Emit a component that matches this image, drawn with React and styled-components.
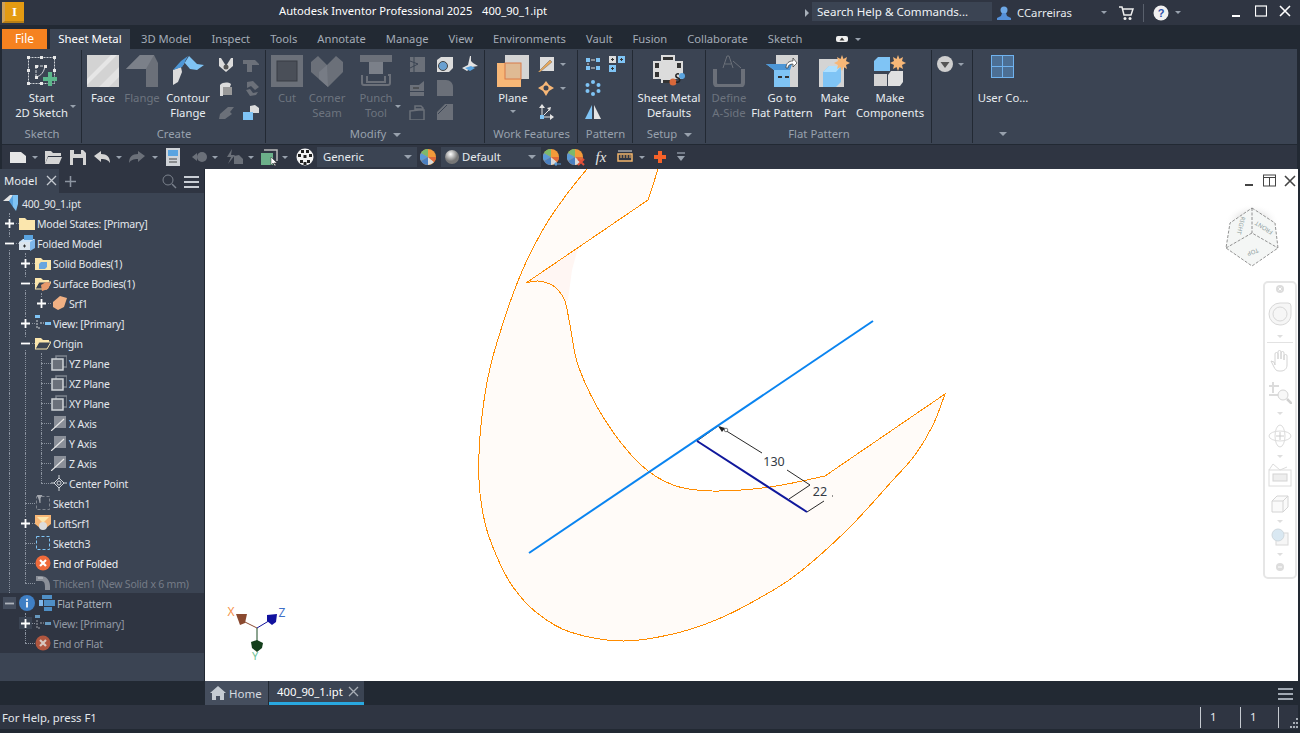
import React from 'react';
import styled, { createGlobalStyle } from 'styled-components';

const Global = createGlobalStyle`
  html, body { margin: 0; padding: 0; height: 100%; overflow: hidden; background: #222933; }
  #root { height: 100%; }
  * { box-sizing: border-box; }
`;
const DARK = '#222933', MID = '#2f3542', PANEL = '#3b4453';

const Shell = styled.div`
  width: 1300px; height: 733px; background: ${DARK}; display: flex; flex-direction: column;
  font-family: "Noto Sans", "Open Sans", sans-serif; font-size: 11.3px; color: #e8ecf0; overflow: hidden; white-space: nowrap;
`;
const Svg = styled.svg`display: block; flex-shrink: 0;`;
const I = ({ s = 16, v, h, children }) => {
  const box = v || s;
  return <Svg width={s} height={h || s} viewBox={`0 0 ${box} ${h ? (box * h) / s : box}`}>{children}</Svg>;
};
const Caret = styled.span`
  display: inline-block; flex-shrink: 0; width: 0; height: 0;
  border-left: ${p => p.$s || 3.5}px solid transparent; border-right: ${p => p.$s || 3.5}px solid transparent;
  border-top: ${p => p.$s || 3.5}px solid ${p => p.$c || '#98a1ad'};
`;

/* ---------- title bar ---------- */
const TitleBar = styled.div`height: 25px; background: ${MID}; display: flex; align-items: center; flex-shrink: 0; position: relative;`;
const AppLogo = styled.div`
  width: 22px; height: 21px; margin-left: 2px; background: #e49b12; border-left: 3px solid #cfa15b; border-bottom: 2px solid #b77f16;
  color: #fff; font: bold 13px "Liberation Serif", serif; display: flex; align-items: center; justify-content: center;
`;
const TitleText = styled.div`color: #fff; font-size: 11.2px; margin-left: ${p => p.$ml || 0}px; width: ${p => p.$w}px; padding-bottom: 5px;`;
const SearchArrow = styled.span`
  width: 0; height: 0; margin-left: ${p => p.$ml}px; border-top: 4px solid transparent; border-bottom: 4px solid transparent; border-left: 4px solid #a8b0ba;
`;
const SearchBox = styled.div`
  width: 180px; height: 19px; margin: 0 0 2px 3px; background: ${PANEL}; color: #f0f3f6; font-size: 11.6px; padding-left: 5px; line-height: 19px;
`;
const SearchGap = styled.div`width: 4px;`;
const UserName = styled.div`font-size: 11.3px; color: #e6eaee; margin-left: 5px; width: 84px;`;
const CartWrap = styled.div`margin-left: 11px;`;
const BarDivider = styled.div`width: 1px; height: 18px; background: #59606c; margin: 0 9px;`;
const HelpCaret = styled.div`margin-left: 6px; display: flex;`;
const WinButtons = styled.div`margin-left: 50px; padding-bottom: 3px; display: flex; align-items: center; gap: 12px;`;

/* ---------- tabs ---------- */
const TabsRow = styled.div`height: 24px; background: ${DARK}; display: flex; align-items: flex-end; padding-left: 2px; flex-shrink: 0;`;
const FileTab = styled.div`
  width: 45px; height: 20px; background: #f58220; color: #fff; font-size: 12px; text-align: center; line-height: 20px; margin-right: 3px;
`;
const Tab = styled.div`
  height: 20px; line-height: 20px; font-size: 11.2px; padding: 0 10px; text-align: center;
  background: ${p => (p.$active ? PANEL : 'transparent')}; color: ${p => (p.$active ? '#fff' : '#a4acb7')};
  ${p => p.$active && 'width: 80px; margin-right: 1px; padding: 0; font-size: 11.4px;'}
`;
const TabExtra = styled.div`display: flex; align-items: center; gap: 6px; height: 20px; margin-left: 22px;`;

/* ---------- ribbon ---------- */
const Ribbon = styled.div`height: 95px; margin: 0 3px 0 2px; background: ${PANEL}; display: flex; flex-shrink: 0;`;
const Panel = styled.div`
  width: ${p => p.$w}px; flex: ${p => (p.$grow ? '1' : 'none')}; display: flex; flex-direction: column; position: relative;
  ${p => !p.$grow && `&::after { content: ""; position: absolute; right: 0; top: 1px; bottom: 1px; width: 1px; background: ${DARK}; }`}
`;
const PanelBody = styled.div`height: 75px; display: flex; padding-left: ${p => p.$pl || 0}px;`;
const PanelFooter = styled.div`
  height: 19px; display: flex; align-items: center; justify-content: center; gap: 7px;
  color: #98a1ad; font-size: 11.3px; ${p => p.$w && `width: ${p.$w}px;`}
`;
const Tool = styled.div`
  width: ${p => p.$w}px; flex-shrink: 0; display: flex; flex-direction: column; align-items: center; padding-top: 6px; position: relative;
  color: ${p => (p.$dim ? '#6d747f' : '#e8ecf0')};
`;
const ToolLabel = styled.div`margin-top: 3px; line-height: 15px; text-align: center; white-space: pre;`;
const ToolSpacer = styled.div`height: 8px; flex-shrink: 0;`;
const ToolCaret = styled(Caret)`position: absolute; left: ${p => p.$x}px; top: 56px;`;
const FooterCaret = styled(Caret)`margin-top: 2px;`;
const PlaneCaret = styled(Caret)`margin-top: 5px;`;
const SmallCol = styled.div`
  width: ${p => p.$w || 24}px; margin-left: ${p => p.$ml || 0}px; flex-shrink: 0; padding-top: 3px; display: flex; flex-direction: column; align-items: ${p => (p.$start ? 'flex-start' : 'center')};
`;
const SmallTool = styled.div`height: 24px; display: flex; align-items: center; gap: ${p => p.$gap || 0}px;`;

/* ---------- quick bar ---------- */
const QuickBar = styled.div`height: 24px; margin: 1px 3px 0 2px; background: ${MID}; display: flex; align-items: center; flex-shrink: 0;`;
const Q = styled.div`
  width: ${p => p.$w || 20}px; margin-left: ${p => p.$ml || 0}px; height: 24px; display: flex; align-items: center; justify-content: center; flex-shrink: 0;
`;
const QCaret = styled(Q)`width: ${p => p.$w || 10}px;`;
const Combo = styled.div`
  width: 100px; height: 20px; margin-left: ${p => p.$ml || 0}px; background: ${PANEL}; display: flex; align-items: center; padding: 0 5px 1px ${p => p.$pl || 6}px; gap: 3px; font-size: 11.3px; flex-shrink: 0; color: #e8ecf0;
  & > span:first-of-type { flex: 1; }
`;

/* ---------- main ---------- */
const Main = styled.div`height: 512px; display: flex; margin-right: 2px; flex-shrink: 0;`;
const Browser = styled.div`width: 204px; margin-right: 1px; background: ${PANEL}; display: flex; flex-direction: column; flex-shrink: 0;`;
const BrowserHead = styled.div`height: 24px; background: ${MID}; display: flex; align-items: center; flex-shrink: 0;`;
const BrowserTab = styled.div`width: 59px; height: 24px; background: ${PANEL}; display: flex; align-items: center; padding: 0 0 2px 4px; gap: 9px; font-size: 11.3px;`;
const HeadIcons = styled.div`margin-left: auto; display: flex; align-items: center; gap: 7px; padding-right: 5px;`;
const PlusBtn = styled.div`margin-left: 6px;`;
const Row = styled.div`height: 20px; flex-shrink: 0; display: flex; align-items: center; padding-left: 1px; color: ${p => p.$c || '#e3e7ec'}; font-size: 10.5px; letter-spacing: -0.2px;`;
const GuideCell = styled.div`
  width: 16px; height: 20px; flex-shrink: 0; position: relative;
  ${p => p.$on && `&::before { content: ""; position: absolute; left: 8px; top: 0; bottom: 0; border-left: 1px dotted #8a929e; }`}
`;
const Expander = styled.div`
  width: 16px; height: 20px; flex-shrink: 0; position: relative; margin-right: 2px;
  ${p => p.$line && `&::before { content: ""; position: absolute; left: 8px; top: 0; ${p.$line === 'half' ? 'height: 10px;' : 'bottom: 0;'} border-left: 1px dotted #8a929e; }`}
  ${p => p.$conn && `&::after { content: ""; position: absolute; left: 8px; right: -2px; top: 10px; border-top: 1px dotted #8a929e; }`}
`;
const Sign = styled.div`
  position: absolute; left: 2px; top: 4px; width: 13px; height: 12px; z-index: 1; background: ${p => p.$bg || PANEL}; display: flex; align-items: center; justify-content: center; color: #fff;
`;
const RowLabel = styled.span`margin-left: ${p => p.$ml ?? 2}px; padding-top: 2px;`;
const RootIcon = styled.div`margin-left: 2px;`;
const FlatSection = styled.div`background: ${MID}; height: 60px; flex-shrink: 0;`;
const FlatGap = styled.div`width: 4px;`;

const Canvas = styled.div`flex: 1; background: #fff; position: relative; overflow: hidden;`;
const Scene = styled.svg`position: absolute; inset: 0; width: 100%; height: 100%;`;
const CanvasButtons = styled.div`position: absolute; right: 2px; top: 5px; display: flex; gap: 8px; align-items: center;`;
const Cube = styled.div`position: absolute; left: 1020px; top: 33px;`;
const NavBar = styled.div`
  position: absolute; left: 1058px; top: 112px; width: 34px; height: 298px; border: 2px solid #e6e6e6; border-radius: 5px; background: #fff; display: flex; flex-direction: column; align-items: center;
`;
const NavItem = styled.div`height: ${p => p.$h}px; flex-shrink: 0; display: flex; align-items: center; justify-content: center; width: 100%;`;
const NavRule = styled.div`width: 26px; height: 1px; background: #e2e2e2; margin: 2px 0 1px; flex-shrink: 0;`;

/* ---------- bottom ---------- */
const DocTabs = styled.div`height: 24px; background: ${DARK}; display: flex; padding-left: 205px; margin-right: 3px; align-items: stretch; flex-shrink: 0;`;
const HomeTab = styled.div`width: 63px; background: #454e5e; display: flex; align-items: center; gap: 3px; padding-left: 5px; color: #d5dae0; font-size: 11.5px; margin-right: 1px;`;
const DocTab = styled.div`width: 95px; background: ${PANEL}; border-bottom: 3px solid #29a8e0; display: flex; align-items: center; padding-left: 8px; color: #fff; font-size: 11.3px; gap: 5px; padding-bottom: 1px;`;
const DocMenu = styled.div`margin-left: auto; display: flex; align-items: center; padding-right: 4px;`;
const Status = styled.div`height: 24px; background: ${MID}; display: flex; align-items: center; padding-left: 2px; font-size: 11.3px; color: #e3e7ec; flex-shrink: 0; margin-right: 2px; `;
const StatusCell = styled.div`
  height: 21px; width: ${p => p.$w}px; border-left: 1px solid #c5cad0; padding-left: 9px; line-height: 20px; flex-shrink: 0; ${p => p.$first && 'margin-left: auto;'}
`;
const Grip = styled.div`width: 20px; display: flex; justify-content: flex-end; align-items: flex-end; height: 21px; border-left: 1px solid #c5cad0;`;

/* ---------- icons, large ---------- */
const GR = '#6b7079', WH = '#dcdcdc', BL = '#7fc4f5', OR = '#f7b777';
const StartSketch = () => (
  <I s={32}>
    <g fill="none" stroke="#cfd3d8">
      <rect x="2.500" y="2.500" width="26" height="26" strokeDasharray="2 1" />
      <path d="M10 11h9M10 11v11" strokeDasharray="3 1" />
      <path d="M19 11c-1 6-4 10-9 11" />
    </g>
    <g fill="#e8e8e8">
      {[[1, 1], [14, 1], [27, 1], [1, 14], [1, 27], [14, 27], [27, 14], [9, 10], [18, 10], [9, 21]].map(([x, y]) => <rect key={x * 100 + y} x={x} y={y} width="3" height="3" />)}
    </g>
    <path d="M22 17h4v5h5v4h-5v5h-4v-5h-5v-4h5z" fill="#5cb88c" />
  </I>
);
const Face = () => (<I s={32}><rect width="32" height="32" fill="#d3d3d3" /><path d="M0 24 24 0h6L0 30z" fill="#e6e6e6" /><path d="M12 32 32 12v10L22 32z" fill="#e2e2e2" /></I>);
const Flange = () => (<I s={32}><path d="M0 14 14 0h14l4 8v24H20V14z" fill={GR} /><path d="M0 14 14 0h14l-8 14z" fill="#7b8089" /></I>);
const Contour = () => (<I s={32}><path d="M10 12 17 1l8 8 7 1-7 5-7-1-6-7z" fill={BL} /><path d="M9 12 1 15v15l5-3 4-10z" fill="#dcdcdc" /><path d="M16 1 9 6 1 15l9-3z" fill="#4c96d6" /></I>);
const Cut = () => (<I s={32}><rect width="32" height="32" fill={GR} /><rect x="6" y="6" width="20" height="20" fill="#4a4f58" stroke="#393d45" /></I>);
const Corner = () => (<I s={32}><path d="M0 7 7 1l9 9 9-9 7 6v10L17 32 0 17z" fill={GR} /><path d="M8 17l8-7 1 22-9-8z" fill="#777c85" /></I>);
const Punch = () => (<I s={32}><rect x="0" y="0" width="32" height="7" fill={GR} /><rect x="9" y="7" width="14" height="12" fill="#7b8089" /><path d="M2 20v8a2 2 0 002 2h24a2 2 0 002-2v-8h-2M7 21v6h18v-6" fill="none" stroke={GR} strokeWidth="2" /></I>);
const Plane = () => (<I s={32}><rect x="8" y="0" width="24" height="24" fill="#d4d4d4" /><rect x="0" y="8" width="24" height="24" fill={OR} /><rect x="8" y="8" width="16" height="16" fill="#dfba94" stroke="#d87b4a" /></I>);
const Defaults = () => (
  <I s={32}>
    <rect x="8" y="0" width="14" height="28" fill="#dcdcdc" />
    <rect x="0" y="6" width="8" height="18" fill="#dcdcdc" /><rect x="22" y="6" width="8" height="18" fill="#dcdcdc" />
    <rect x="2" y="8" width="4" height="5" fill="#333" /><rect x="2" y="17" width="4" height="5" fill="#333" />
    <rect x="24" y="8" width="4" height="5" fill="#333" /><rect x="10" y="2" width="10" height="3" fill="#333" /><rect x="10" y="25" width="10" height="3" fill="#333" />
    <circle cx="20" cy="27" r="3.500" fill="#d9683a" /><circle cx="29" cy="21" r="3" fill="#5aa4e0" />
    <path d="M26 19c-4-1-4 3-1 4s2 5-2 4" fill="none" stroke="#222" strokeWidth="1.500" />
  </I>
);
const DefineASide = () => (<I s={32}><path d="M2 14v14a3 3 0 003 3h22a3 3 0 003-3V14" fill="none" stroke={GR} strokeWidth="4" /><path d="M10 13 14 1h2l4 12M12 9h6M20 6l8 7" fill="none" stroke={GR} /></I>);
const GoFlat = () => (<I s={32}><rect x="10" y="0" width="22" height="32" fill="#d4d4d4" /><path d="M0 9h26l-2 6v17H8V15z" fill={BL} /><path d="M0 9l8 6h16l2-6z" fill="#4c96d6" /><rect x="12" y="21" width="4" height="2" fill="#333" /><rect x="19" y="21" width="4" height="2" fill="#333" /><path d="M20 13c0-5 3-7 7-7V3l4 5-4 4V9c-3 0-5 1-5 4z" fill="#fff" stroke="#333" strokeWidth=".7" /></I>);
const Star = ({ x = 0, y = 0 }) => (<path transform={`translate(${x} ${y})`} d="M8 0l1.500 4L13 2l-1 4 4 2-4 2 1 4-3.500-2L8 16l-1.500-4L3 14l1-4-4-2 4-2-1-4 3.500 2z" fill={OR} />);
const MakePart = () => (<I s={32}><rect x="0" y="4" width="25" height="28" fill="#d4d4d4" /><path d="M4 17l6-6h12v16l-5 5H4z" fill={BL} /><path d="M4 17l6-6h12l-5 6z" fill="#aee0ff" /><Star x="15" y="0" /></I>);
const MakeComp = () => (<I s={32}><path d="M0 6l4-4h12v14H0z" fill={BL} /><path d="M0 19h13v12H0z" fill="#d4d4d4" /><path d="M14 20l3-4h12v11l-3 4H14z" fill="#e0e0e0" /><Star x="16" y="0" /></I>);
const UserGrid = () => (<I s={24}><rect x=".5" y=".5" width="22" height="22" fill="#4c6f94" stroke="#6fb2ee" /><path d="M11.500 1v22M1 11.500h22" stroke="#6fb2ee" /></I>);

/* ---------- icons, small ---------- */
const Cone = () => (<I><path d="M1 2h14v8l-7 6-7-6z" fill={WH} /><path d="M3 2l5 8 5-8z" fill="#3b4453" /><circle cx="8" cy="11" r="2.500" fill="#555" /></I>);
const Dim1 = () => (<I><path d="M0 4h12l4 4v1H9v7H4V8H0z" fill={GR} /></I>);
const Fold = () => (<I><path d="M2 5c3-3 8-3 11-1l-1 3H5v9H2z" fill={WH} /><path d="M5 7h9v8H5z" fill="#999" /></I>);
const Dim2 = () => (<I><path d="M4 2l6-1 6 6-4 3-4-4-4 2zM3 10l4 6 6-1 2-3-5 1-3-4z" fill={GR} /></I>);
const Dim3 = () => (<I><path d="M2 10 10 3h6l-4 5 2 2-7 5H1z" fill={GR} /></I>);
const Unfold = () => (<I><path d="M7 2l5-1 4 3v5H7z" fill={WH} /><path d="M0 8h10v8H0z" fill={BL} /></I>);
const Dim4 = () => (<I><rect x="1" y="1" width="15" height="15" fill={GR} /><path d="M5 1v15M1 5l8 3-8 4" stroke="#3b4453" fill="none" /></I>);
const Dim5 = () => (<I><path d="M1 5h9l5-4v10H1zM1 12h14v4H1z" fill={GR} /><path d="M4 8h6" stroke="#333" /></I>);
const Dim6 = () => (<I><path d="M1 7l9-1h5v10H1zM6 2h6l2 2v1H6z" fill="none" stroke={GR} strokeWidth="1.500" /></I>);
const Hole = () => (<I><path d="M0 4l4-3h12v11l-4 4H0z" fill={WH} /><circle cx="6" cy="10" r="4.500" fill="#6aa0d0" stroke="#444" /></I>);
const Round = () => (<I><path d="M0 0h9c4 0 7 3 7 7v9H0z" fill={GR} /></I>);
const Chamfer = () => (<I><path d="M0 16V8L8 0h8v16z" fill={GR} /><path d="M1 10 10 1" stroke="#3b4453" /></I>);
const Bend = () => (<I><path d="M8 0h1v5l2 2 5 3-6 1-5 4-5-3 6-3z" fill="#e4e4e4" /><path d="M3 12l6-2 4 2-5 3z" fill="#5aa4e0" /></I>);
const WorkAxis = () => (<I><rect x="2" y="1" width="14" height="14" fill="#ddd" /><path d="M0 16 12 4l2 2L2 16z" fill="#e8a85c" stroke="#555" strokeWidth=".4" /></I>);
const WorkPoint = () => (<I><path d="M8 1l3 4 5 3-5 3-3 5-3-5-5-3 5-3z" fill="#f7b777" /><circle cx="8" cy="8" r="2.500" fill="#3b4453" /></I>);
const Ucs = () => (<I><path d="M4 15V2M3 13h12M4 13l8-8" stroke="#e4e4e4" fill="none" /><path d="M4 0l-3 4h6zM16 13l-4-3v6zM13 3l-4 1 3 3z" fill="#e4e4e4" /><rect x="2" y="11" width="4" height="4" fill="#7fc4f5" /></I>);
const RectPat = () => (<I><rect x="1" y="2" width="4" height="4" fill={BL} /><rect x="11" y="2" width="4" height="4" fill={BL} /><rect x="1" y="10" width="4" height="4" fill={BL} /><rect x="11" y="10" width="4" height="4" fill={BL} /><path d="M6 4h4M6 12h4M3 7v2" stroke="#ddd" /></I>);
const PlusPat = () => (<I s={20}><rect x="1" y="2" width="7" height="7" fill="#ddd" /><rect x="10" y="2" width="7" height="7" fill={BL} /><rect x="1" y="11" width="7" height="7" fill={BL} /><path d="M3 5.500h3M4.500 4v3M12 5.500h3M13.500 4v3M3 14.500h3M4.500 13v3" stroke="#333" /></I>);
const CircPat = () => (<I><g fill={BL}><circle cx="8" cy="2" r="2" /><circle cx="13.500" cy="5" r="2" /><circle cx="13.500" cy="11" r="2" /><circle cx="8" cy="14" r="2" /><circle cx="2.500" cy="11" r="2" /><circle cx="2.500" cy="5" r="2" /></g></I>);
const Mirror = () => (<I><path d="M7 1 0 15h7z" fill={BL} /><path d="M9 1l7 14H9z" fill="#e4e4e4" /></I>);
const DownCircle = () => (<I><circle cx="8" cy="8" r="8" fill="#cfcfcf" /><path d="M3.500 6h9L8 12z" fill="#555" /></I>);

const NewDoc = () => (<I><path d="M0 3h11l5 4v7H0z" fill="#e6e6e6" /></I>);
const OpenF = () => (<I s={18}><path d="M1 3h6l2 2h8v3H4l-3 8z" fill="#d5d5d5" /><path d="M4 9h14l-3 7H1z" fill="#d5d5d5" /></I>);
const Save = () => (<I><path d="M0 1h13l3 3v12H0z" fill="#d5d5d5" /><rect x="4" y="1" width="7" height="4" fill="#2f3542" /><rect x="3" y="9" width="10" height="7" fill="#2f3542" /></I>);
const Undo = ({ c = '#d5d5d5', flip }) => (<I><g transform={flip ? 'translate(16 0) scale(-1 1)' : undefined}><path d="M0 7l7-5v3c6 0 9 3 9 9-2-3-4-4-9-4v3z" fill={c} /></g></I>);
const Calc = () => (<I s={18}><rect x="2" y="0" width="14" height="18" fill="#cfd3d8" /><rect x="4" y="2" width="10" height="6" fill="#5aa4e0" /><path d="M5 11h8M5 14h8" stroke="#444" /></I>);
const DimBall = () => (<I><circle cx="10" cy="8" r="5" fill={GR} /><path d="M0 8l5-4v8z" fill={GR} /></I>);
const DimBolt = () => (<I s={18}><path d="M6 1 1 9h4l-3 7 7-9H5z" fill={GR} /><path d="M8 8l5-1 4 4v5H8z" fill={GR} /></I>);
const Stack = () => (<I s={18}><rect x="1" y="5" width="12" height="12" fill="#6cb08a" /><path d="M4 2h13v11" fill="none" stroke="#bbb" strokeWidth="1.500" /><path d="M11 9v8l2-2 2 3 1-1-2-2h3z" fill="#fff" stroke="#333" strokeWidth=".5" /></I>);
const Checker = () => (
  <I s={18}>
    <circle cx="9" cy="9" r="8.500" fill="#f4f4f4" />
    <g fill="#222">{[[5, 2], [10, 2], [2, 6], [7.500, 7], [13, 6], [4, 12], [11, 12], [7.500, 14]].map(([x, y]) => <rect key={x * 50 + y} x={x} y={y} width="3" height="3" />)}</g>
  </I>
);
const Wheel = ({ badge }) => (
  <I s={18}>
    <circle cx="8" cy="9" r="8" fill="#f29a3a" />
    <path d="M8 9V1a8 8 0 00-7 4z" fill="#7cb96b" /><path d="M8 9 1 5a8 8 0 000 8z" fill="#5a9ad6" /><path d="M8 9l-7 4a8 8 0 007 4z" fill="#4a7fc0" /><path d="M8 9v8a8 8 0 006-3z" fill="#d9d9d9" /><path d="M8 9l6 5a8 8 0 002-5z" fill="#e06a3a" />
    {badge === 'x' && <path d="M11 11l6 6M17 11l-6 6" stroke="#e0503a" strokeWidth="2" />}
    {badge === 'p' && <path d="M12 15h2v2h-2zM15 16h3" stroke="#5a9ad6" fill="#5a9ad6" />}
  </I>
);
const Sphere = () => (<I s={14}><defs><radialGradient id="sp" cx=".4" cy=".3"><stop offset="0" stopColor="#fff" /><stop offset="1" stopColor="#777" /></radialGradient></defs><circle cx="7" cy="7" r="7" fill="url(#sp)" /></I>);
const Fx = styled.span`font: italic 15px "Liberation Serif", serif; color: #e4e4e4;`;
const Ruler = () => (<I><rect x="1" y="5" width="14" height="7" fill="none" stroke="#f3b56b" strokeWidth="1.500" /><path d="M4 6v3M7 6v3M10 6v3M13 6v3" stroke="#f3b56b" /><path d="M1 2h14" stroke="#ddd" /></I>);
const OrangePlus = () => (<I s={14}><path d="M5 1h4v4h4v4H9v4H5V9H1V5h4z" fill="#f4622a" /></I>);
const MoreCaret = () => (<I s={10}><path d="M1 1h8" stroke="#98a1ad" strokeWidth="1.300" /><path d="M1 4h8L5 9z" fill="#98a1ad" /></I>);

const UserIco = () => (<I><circle cx="8" cy="5" r="3.500" fill="#6ea8e6" /><path d="M6 8h4l1 3 4 2v2H1v-2l4-2z" fill="#5590d8" /></I>);
const Cart = () => (<I><path d="M1 2h3l2 8h7l2-6H5" fill="none" stroke="#eee" strokeWidth="1.500" /><circle cx="7" cy="13.500" r="1.500" fill="#eee" /><circle cx="12" cy="13.500" r="1.500" fill="#eee" /></I>);
const HelpIco = () => (<I><circle cx="8" cy="8" r="7.500" fill="#f0f0f0" /><text x="8" y="12" textAnchor="middle" fontSize="11" fontWeight="bold" fill="#2d4fa8" fontFamily="Liberation Sans">?</text></I>);
const WinMin = () => (<I s={12}><rect x="1" y="10" width="8" height="2" fill="#fff" /></I>);
const WinMax = () => (<I s={12}><rect x=".5" y="1" width="11" height="10" fill="none" stroke="#fff" strokeWidth="1.200" /></I>);
const WinClose = ({ c = '#fff' }) => (<I s={12}><path d="M1 1l10 10M11 1 1 11" stroke={c} strokeWidth="1.600" /></I>);
const Burger = ({ c = '#c9ced5' }) => (<I s={15}><path d="M0 2h15v2H0zM0 7h15v2H0zM0 12h15v2H0z" fill={c} /></I>);
const X = ({ c = '#c4c9d0' }) => (<I s={11}><path d="M1 1l9 9M10 1 1 10" stroke={c} strokeWidth="1.300" /></I>);
const Plus = ({ s = 9, c = '#fff', w = 2 }) => (<I s={s} v={10}><path d="M5 0v10M0 5h10" stroke={c} strokeWidth={w} /></I>);
const Minus = ({ c = '#fff' }) => (<I s={9} v={10}><path d="M0 5h10" stroke={c} strokeWidth="2" /></I>);
const Magnify = () => (<I s={15}><circle cx="6" cy="6" r="5" fill="none" stroke="#7b828d" /><path d="M10 10l4 4" stroke="#7b828d" strokeWidth="1.500" /></I>);
const HomeIco = () => (<I><path d="M8 1 0 8h2v7h4v-4h4v4h4V8h2z" fill="#c5cbd2" /></I>);

/* ---------- tree icons ---------- */
const Folder = ({ children }) => (<I><path d="M0 3h6l2 2h8v10H0z" fill="#fbe6ad" />{children}</I>);
const FolderOpen = ({ children }) => (<I><path d="M0 3h6l2 2h6v2H4L0 14z" fill="#fbe6ad" /><path d="M0 14 4 7h12l-4 7z" fill="none" stroke="#fbe6ad" />{children}</I>);
const TFile = () => (<I><path d="M0 6 7 0h3L8 6z" fill="#e4e4e4" /><path d="M10 0h5v9l-2 7-3-4z" fill={BL} /><path d="M6 6l4-6v12z" fill="#5aa4e0" /></I>);
const TFolded = () => (<I><path d="M0 7l4-3h12l-3 3z" fill="#cfe4f8" /><rect x="0" y="7" width="11" height="8" fill="#dce5ee" /><path d="M11 7l5-3v9l-5 3z" fill="#7fb7ea" /><path d="M5 0h9v5H5z" fill="#5aa4e0" /><path d="M4 11h3M5.500 9.500v3" stroke="#333" /></I>);
const TSolid = () => (<Folder><path d="M4 9l2-2h6v5l-2 2H4z" fill="#6aa6e0" /></Folder>);
const TSurface = () => (<FolderOpen><path d="M6 10l5-3 5 1-3 6-6 2z" fill="#e8996b" /></FolderOpen>);
const TSrf = () => (<I><path d="M2 7 9 1l7 2-3 9-6 3-5-3z" fill="#f0b184" /></I>);
const TView = ({ d }) => (<I><g opacity={d ? .7 : 1}><rect x="0" y="0" width="5" height="3" fill={BL} /><rect x="10" y="7" width="6" height="3" fill={BL} /><path d="M2 5v8h3M5 8h4" stroke="#cfd3d8" fill="none" strokeDasharray="2 1" /></g></I>);
const TPlane = () => (<I><rect x="5" y="1" width="11" height="11" fill="none" stroke="#7e848e" strokeWidth="1.500" /><rect x="1" y="4" width="11" height="11" fill="#6a707a" stroke="#cfd3d8" strokeWidth="1.500" /></I>);
const TAxis = () => (<I><rect x="3" y="1" width="12" height="12" fill="#8a8f98" /><path d="M0 16 13 4" stroke="#e8e8e8" strokeWidth="1.200" /></I>);
const TPoint = () => (<I><path d="M8 3l5 5-5 5-5-5z" fill="none" stroke="#cfd3d8" /><circle cx="8" cy="8" r="2" fill="#3b4453" stroke="#cfd3d8" /><path d="M8 0v3M8 13v3M0 8h3M13 8h3" stroke="#cfd3d8" /></I>);
const TSketch = ({ c = '#7e848e', hi }) => (<I><rect x="1.500" y="1.500" width="13" height="13" fill="none" stroke={c} strokeDasharray="3 2" />{!hi && <path d="M2 0h5l-2 3v5" fill="#a5a9b0" stroke="#a5a9b0" />}</I>);
const TSketchBlue = () => <TSketch c="#7fc4f5" hi />;
const TLoft = () => (<I><path d="M0 0h16v9l-5 4H5L0 9z" fill={OR} /><path d="M2 2h12L8 8z" fill="#fbe6ad" /><circle cx="8" cy="11" r="4" fill="#dcdcdc" /></I>);
const TEnd = ({ d }) => (<I><circle cx="8" cy="8" r="7.500" fill={d ? '#b0563f' : '#ef6b3b'} /><path d="M5 5l6 6M11 5l-6 6" stroke={d ? '#d9c8c0' : '#fff'} strokeWidth="2.200" /></I>);
const TThick = () => (<I><path d="M1 6h5c3 0 4 2 4 6v3h5v-4C15 5 11 1 6 1H1z" fill="#8a8f98" /><path d="M3 3h5" stroke="#c5c9cf" /></I>);
const TInfo = () => (<I><circle cx="8" cy="8" r="8" fill="#3f7fc4" /><rect x="7" y="7" width="2" height="5.500" fill="#e8eef5" /><rect x="7" y="3.800" width="2" height="2" fill="#e8eef5" /></I>);
const TFlat = () => (<I><rect x="3" y="0" width="10" height="4" fill="#4f8fc6" /><rect x="0" y="5" width="4" height="6" fill="#7fb7ea" /><rect x="5" y="5" width="11" height="6" fill="#4f8fc6" /><rect x="5" y="12" width="8" height="4" fill="#4f8fc6" /></I>);
const TViewDim = () => <TView d />;
const TEndDim = () => <TEnd d />;

const rows = [
  { g: [], sign: '+', line: 'full', conn: 1, Ic: Folder, t: 'Model States: [Primary]' },
  { g: [], sign: '-', line: 'full', conn: 1, Ic: TFolded, t: 'Folded Model' },
  { g: [1], sign: '+', line: 'full', conn: 1, Ic: TSolid, t: 'Solid Bodies(1)' },
  { g: [1], sign: '-', line: 'full', conn: 1, Ic: TSurface, t: 'Surface Bodies(1)' },
  { g: [1, 1], sign: '+', conn: 1, line: 'half', Ic: TSrf, t: 'Srf1' },
  { g: [1], sign: '+', line: 'full', conn: 1, Ic: TView, t: 'View: [Primary]' },
  { g: [1], sign: '-', line: 'full', conn: 1, Ic: FolderOpen, t: 'Origin' },
  { g: [1, 1], line: 'full', conn: 1, Ic: TPlane, t: 'YZ Plane' },
  { g: [1, 1], line: 'full', conn: 1, Ic: TPlane, t: 'XZ Plane' },
  { g: [1, 1], line: 'full', conn: 1, Ic: TPlane, t: 'XY Plane' },
  { g: [1, 1], line: 'full', conn: 1, Ic: TAxis, t: 'X Axis' },
  { g: [1, 1], line: 'full', conn: 1, Ic: TAxis, t: 'Y Axis' },
  { g: [1, 1], line: 'full', conn: 1, Ic: TAxis, t: 'Z Axis' },
  { g: [1, 1], line: 'half', conn: 1, Ic: TPoint, t: 'Center Point' },
  { g: [1], line: 'full', conn: 1, Ic: TSketch, t: 'Sketch1' },
  { g: [1], sign: '+', line: 'full', conn: 1, Ic: TLoft, t: 'LoftSrf1' },
  { g: [1], line: 'full', conn: 1, Ic: TSketchBlue, t: 'Sketch3' },
  { g: [1], line: 'full', conn: 1, Ic: TEnd, t: 'End of Folded', c: '#f2f4f6' },
  { g: [1], line: 'half', conn: 1, Ic: TThick, t: 'Thicken1 (New Solid x 6 mm)', c: '#767c87' },
];

const TreeRow = ({ g, sign, line, conn, Ic, t, c, bg }) => (
  <Row $c={c}>
    {g.map((on, i) => <GuideCell key={i} $on={on} />)}
    <Expander $line={line} $conn={conn}>
      {sign && <Sign $bg={bg}>{sign === '+' ? <Plus /> : <Minus />}</Sign>}
    </Expander>
    <Ic />
    <RowLabel>{t}</RowLabel>
  </Row>
);

/* ---------- scene geometry ---------- */
const smooth = (pts, first = true) => {
  let d = first ? `M${pts[0][0]} ${pts[0][1]}` : `L${pts[0][0]} ${pts[0][1]}`;
  for (let i = 0; i < pts.length - 1; i++) {
    const p0 = pts[i - 1] || pts[i], p1 = pts[i], p2 = pts[i + 1], p3 = pts[i + 2] || p2;
    d += `C${p1[0] + (p2[0] - p0[0]) / 6} ${p1[1] + (p2[1] - p0[1]) / 6} ${p2[0] - (p3[0] - p1[0]) / 6} ${p2[1] - (p3[1] - p1[1]) / 6} ${p2[0]} ${p2[1]}`;
  }
  return d;
};
const outer = [[587, 169], [570, 190], [550, 218], [533, 248], [520, 276], [507, 311], [490, 368], [481, 425], [479, 480], [485, 523], [497, 557], [513, 587], [537, 613], [570, 632], [623, 641], [677, 633], [723, 617], [770, 592], [800, 572], [848, 529], [893, 480], [915, 455], [933, 425], [945, 394]];
const inner = [[825, 476], [770, 487], [712, 491], [673, 485], [640, 464], [605, 420], [579, 368], [570, 325], [565, 301], [558, 290], [550, 284], [538, 281], [526, 283]];
const tail = [[648, 200], [652, 188], [658, 169]];
const shape = `${smooth(outer)}${smooth(inner, false)}${smooth(tail, false)}`;

const SceneDrawing = () => (
  <Scene viewBox="205 169 1093 512">
    <path d={shape} fill="#fffbf8" />
    <path d="M526 283 578 248 572 270 568 300 565 301 558 290 550 284 538 281z" fill="#fff6f3" />
    <path d={shape} fill="none" stroke="#ff8c00" strokeWidth="1" shapeRendering="crispEdges" />
    <g stroke="#111" strokeWidth=".9" fill="none">
      <path d="M697 441 718 426M720 427 762 453M787 470 810 485 789 499M807 512 824 501M832 496h1" />
    </g>
    <path d="M718 426l7 2-3 4z" fill="#222" />
    <circle cx="726" cy="430" r="1.800" fill="#fff" stroke="#444" strokeWidth=".7" />
    <path d="M529 553 873 321" stroke="#0a84f0" strokeWidth="2" />
    <path d="M697 441 807 512" stroke="#10189c" strokeWidth="2" />
    <text x="774" y="466" textAnchor="middle" fontSize="12.500" fill="#333a45" fontFamily="Noto Sans">130</text>
    <text x="820" y="496" textAnchor="middle" fontSize="12.500" fill="#333a45" fontFamily="Noto Sans">22</text>
    <g>
      <path d="M257 628 241 620" stroke="#8a4a30" /><path d="M257 628 272 619" stroke="#12129a" /><path d="M257 628V642" stroke="#1a4a22" />
      <path d="M236 614h11l-2 9-5 2z" fill="#8a4a30" /><path d="M267 615l10-1-1 8-4 3-5-4z" fill="#11119e" /><path d="M251 642l6-2 6 3-1 5-5 4-5-4z" fill="#143f1c" />
      <text x="231" y="616" textAnchor="middle" fontSize="12" fill="#f5914a" fontFamily="Noto Sans">X</text>
      <text x="282" y="617" textAnchor="middle" fontSize="12" fill="#3f6fc8" fontFamily="Noto Sans">Z</text>
      <text x="255" y="660" textAnchor="middle" fontSize="11" fill="#6fc49a" fontFamily="Noto Sans">Y</text>
    </g>
  </Scene>
);
const ViewCube = () => (
  <Svg width="54" height="65" viewBox="0 0 54 65">
    <defs><radialGradient id="cubeShade" cx=".5" cy=".5"><stop offset="0" stopColor="#999" /><stop offset="1" stopColor="#fff" stopOpacity="0" /></radialGradient></defs>
    <ellipse cx="27" cy="20" rx="27" ry="18" fill="url(#cubeShade)" />
    <path d="M27 6 50 21l3 25-26 18L1 46l4-25z" fill="#f4f6f5" />
    <g fill="none" stroke="#777" strokeDasharray="3 1.500" strokeWidth=".8">
      <path d="M27 6 50 21l3 25-26 18L1 46l4-25z" /><path d="M27 6 27 31M1 46 27 31 53 46" />
    </g>
    <g fontFamily="Noto Sans" fontSize="6" fill="#8a9a9a">
      <text transform="translate(14 23) rotate(105)" textAnchor="middle">RIGHT</text>
      <text transform="translate(40 24) rotate(212)" textAnchor="middle">FRONT</text>
      <text transform="translate(27 48) rotate(160)" textAnchor="middle">TOP</text>
    </g>
  </Svg>
);
const NavWheel = () => (<I s={24}><path d="M12 1a11 11 0 1 0 0 22c6 0 11-4 11-11V4a3 3 0 00-3-3z" fill="#f6f6f6" stroke="#d8d8d8" /><circle cx="12" cy="12" r="7" fill="none" stroke="#d8d8d8" /></I>);
const NavHand = () => (<I s={24}><path d="M3 13l3 1 1 3V6a1.200 1.200 0 013 0v5V4a1.200 1.200 0 013 0v7V5a1.200 1.200 0 013 0v7-4a1.200 1.200 0 013 0v9c0 4-3 6-6 6h-2c-3 0-4-2-5-4z" fill="#fff" stroke="#d4d4d4" /></I>);
const NavZoom = () => (<I s={24}><path d="M5 2v11M1 6h10M1 15h10" stroke="#dcdcdc" strokeWidth="2" /><circle cx="15" cy="15" r="5" fill="#f8f8f8" stroke="#d4d4d4" /><path d="M19 19l5 5" stroke="#d0d0d0" strokeWidth="2.500" /></I>);
const NavOrbit = () => (<I s={24}><ellipse cx="12" cy="12" rx="11" ry="5" fill="none" stroke="#dcdcdc" /><ellipse cx="12" cy="12" rx="5" ry="11" fill="none" stroke="#dcdcdc" /><path d="M12 8v8M8 12h8" stroke="#ccc" /></I>);
const NavLook = () => (<I s={24}><rect x="1" y="7" width="22" height="16" fill="none" stroke="#dcdcdc" /><rect x="5" y="11" width="14" height="7" fill="#eee" stroke="#d4d4d4" /><path d="M1 7l4-6 7 6 7-3" fill="none" stroke="#dcdcdc" /></I>);
const NavCube = () => (<I s={18}><path d="M1 6l5-5h11v11l-5 5H1z" fill="#fafafa" stroke="#d4d4d4" /><path d="M1 6h11v11M12 6l5-5" fill="none" stroke="#d4d4d4" /></I>);
const NavSphere = () => (<I s={18}><rect x="5" y="5" width="12" height="12" fill="#f6f6f6" stroke="#d8d8d8" /><circle cx="7" cy="7" r="6" fill="#d9e8f2" stroke="#cfd8de" /></I>);
const NavX = () => (<I s={8}><circle cx="4" cy="4" r="4" fill="#dcdcdc" /><path d="M2.500 2.500l3 3M5.500 2.500l-3 3" stroke="#fff" /></I>);
const NavMin = () => (<I s={8}><circle cx="4" cy="4" r="4" fill="#dcdcdc" /><path d="M2 4h4" stroke="#fff" /></I>);
const NC = () => <Caret $s={3} $c="#dedede" />;

const App = () => (
  <Shell>
    <Global />
    <TitleBar>
      <AppLogo>I</AppLogo>
      <TitleText $ml={255} $w={203}>Autodesk Inventor Professional 2025</TitleText>
      <TitleText $w={64}>400_90_1.ipt</TitleText>
      <SearchArrow $ml={259} />
      <SearchBox>Search Help &amp; Commands...</SearchBox>
      <SearchGap />
      <UserIco />
      <UserName>CCarreiras</UserName>
      <Caret $s={3} />
      <CartWrap><Cart /></CartWrap>
      <BarDivider />
      <HelpIco />
      <HelpCaret><Caret $s={3} /></HelpCaret>
      <WinButtons><WinMin /><WinMax /><WinClose /></WinButtons>
    </TitleBar>

    <TabsRow>
      <FileTab>File</FileTab>
      <Tab $active>Sheet Metal</Tab>
      {['3D Model', 'Inspect', 'Tools', 'Annotate', 'Manage', 'View', 'Environments', 'Vault', 'Fusion', 'Collaborate', 'Sketch'].map(t => <Tab key={t}>{t}</Tab>)}
      <TabExtra>
        <I s={14}><rect x="1" y="4" width="12" height="6" rx="2" fill="#eee" /><path d="M4.500 8.500h5L7 5.500z" fill="#333" /></I>
        <Caret $s={3} />
      </TabExtra>
    </TabsRow>

    <Ribbon>
      <Panel $w={80}>
        <PanelBody>
          <Tool $w={79}><StartSketch /><ToolLabel>{'Start\n2D Sketch'}</ToolLabel><ToolCaret $x={68} $s={3} /></Tool>
        </PanelBody>
        <PanelFooter>Sketch</PanelFooter>
      </Panel>
      <Panel $w={184}>
        <PanelBody $pl={2}>
          <Tool $w={38}><Face /><ToolLabel>Face</ToolLabel></Tool>
          <Tool $w={40} $dim><Flange /><ToolLabel>Flange</ToolLabel></Tool>
          <Tool $w={52}><Contour /><ToolLabel>{'Contour\nFlange'}</ToolLabel></Tool>
          <SmallCol><SmallTool><Cone /></SmallTool><SmallTool><Fold /></SmallTool><SmallTool><Dim3 /></SmallTool></SmallCol>
          <SmallCol $ml={1}><SmallTool><Dim1 /></SmallTool><SmallTool><Dim2 /></SmallTool><SmallTool><Unfold /></SmallTool></SmallCol>
        </PanelBody>
        <PanelFooter>Create</PanelFooter>
      </Panel>
      <Panel $w={219}>
        <PanelBody $pl={2}>
          <Tool $w={38} $dim><Cut /><ToolLabel>Cut</ToolLabel></Tool>
          <Tool $w={42} $dim><Corner /><ToolLabel>{'Corner\nSeam'}</ToolLabel></Tool>
          <Tool $w={56} $dim><Punch /><ToolLabel>{'Punch\nTool'}</ToolLabel><ToolCaret $x={47} $s={3} /></Tool>
          <SmallCol $ml={1}><SmallTool><Dim4 /></SmallTool><SmallTool><Dim5 /></SmallTool><SmallTool><Dim6 /></SmallTool></SmallCol>
          <SmallCol $ml={4}><SmallTool><Hole /></SmallTool><SmallTool><Round /></SmallTool><SmallTool><Chamfer /></SmallTool></SmallCol>
          <SmallCol $ml={1}><SmallTool><Bend /></SmallTool></SmallCol>
        </PanelBody>
        <PanelFooter>Modify <FooterCaret $s={4} /></PanelFooter>
      </Panel>
      <Panel $w={93}>
        <PanelBody $pl={5}>
          <Tool $w={46}><Plane /><ToolLabel>Plane</ToolLabel><PlaneCaret $s={3} /></Tool>
          <SmallCol $w={36} $start $ml={2}>
            <SmallTool $gap={6}><WorkAxis /><Caret $s={3} /></SmallTool>
            <SmallTool $gap={6}><WorkPoint /><Caret $s={3} /></SmallTool>
            <SmallTool><Ucs /></SmallTool>
          </SmallCol>
        </PanelBody>
        <PanelFooter>Work Features</PanelFooter>
      </Panel>
      <Panel $w={55}>
        <PanelBody $pl={7}>
          <SmallCol $w={16}><SmallTool><RectPat /></SmallTool><SmallTool><CircPat /></SmallTool><SmallTool><Mirror /></SmallTool></SmallCol>
          <SmallCol $w={20} $ml={7}><SmallTool><PlusPat /></SmallTool></SmallCol>
        </PanelBody>
        <PanelFooter>Pattern</PanelFooter>
      </Panel>
      <Panel $w={73}>
        <PanelBody><Tool $w={72}><Defaults /><ToolLabel>{'Sheet Metal\nDefaults'}</ToolLabel></Tool></PanelBody>
        <PanelFooter>Setup <FooterCaret $s={4} /></PanelFooter>
      </Panel>
      <Panel $w={226}>
        <PanelBody $pl={1}>
          <Tool $w={44} $dim><DefineASide /><ToolLabel>{'Define\nA-Side'}</ToolLabel></Tool>
          <Tool $w={62}><GoFlat /><ToolLabel>{'Go to\nFlat Pattern'}</ToolLabel></Tool>
          <Tool $w={44}><MakePart /><ToolLabel>{'Make\nPart'}</ToolLabel></Tool>
          <Tool $w={66}><MakeComp /><ToolLabel>{'Make\nComponents'}</ToolLabel></Tool>
        </PanelBody>
        <PanelFooter>Flat Pattern</PanelFooter>
      </Panel>
      <Panel $w={41}>
        <PanelBody $pl={5}>
          <SmallCol $w={34} $start><SmallTool $gap={5}><DownCircle /><Caret $s={3} /></SmallTool></SmallCol>
        </PanelBody>
      </Panel>
      <Panel $grow>
        <PanelBody><Tool $w={60}><UserGrid /><ToolSpacer /><ToolLabel>User Co...</ToolLabel></Tool></PanelBody>
        <PanelFooter $w={60}><Caret $s={4} /></PanelFooter>
      </Panel>
    </Ribbon>

    <QuickBar>
      <Q $ml={6}><NewDoc /></Q><QCaret $w={14}><Caret $s={3} /></QCaret>
      <Q $ml={1}><OpenF /></Q><Q $ml={5}><Save /></Q>
      <Q $w={24} $ml={2}><Undo /></Q><QCaret><Caret $s={3} /></QCaret>
      <Q $w={24} $ml={1}><Undo flip c={GR} /></Q><QCaret $ml={1}><Caret $s={3} /></QCaret>
      <Q $ml={3}><Calc /></Q>
      <Q $ml={7}><DimBall /></Q><QCaret><Caret $s={3} /></QCaret>
      <Q $ml={5}><DimBolt /></Q><QCaret $ml={1}><Caret $s={3} /></QCaret>
      <Q $ml={3}><Stack /></Q><QCaret $ml={1}><Caret $s={3} /></QCaret>
      <Q $ml={5}><Checker /></Q>
      <Combo $ml={2}><span>Generic</span><Caret $s={4} /></Combo>
      <Q $ml={2}><Wheel /></Q>
      <Combo $ml={2} $pl={4}><Sphere /><span>Default</span><Caret $s={4} /></Combo>
      <Q $ml={1}><Wheel badge="p" /></Q>
      <Q $ml={4}><Wheel badge="x" /></Q>
      <Q $ml={5}><Fx>fx</Fx></Q>
      <Q $ml={4}><Ruler /></Q>
      <QCaret $ml={2}><Caret $s={3} /></QCaret>
      <Q $ml={3}><OrangePlus /></Q>
      <QCaret $ml={6}><MoreCaret /></QCaret>
    </QuickBar>

    <Main>
      <Browser>
        <BrowserHead>
          <BrowserTab>Model <X /></BrowserTab>
          <PlusBtn><Plus s={11} c="#8d95a1" w={1.4} /></PlusBtn>
          <HeadIcons><Magnify /><Burger /></HeadIcons>
        </BrowserHead>
        <Row><RootIcon><TFile /></RootIcon><RowLabel $ml={3}>400_90_1.ipt</RowLabel></Row>
        {rows.map(r => <TreeRow key={r.t} {...r} />)}
        <FlatSection>
          <Row $c="#a9b0ba">
            <Expander><Sign $bg="#454e5e"><Minus c="#aeb4bc" /></Sign></Expander>
            <TInfo /><FlatGap /><TFlat /><RowLabel>Flat Pattern</RowLabel>
          </Row>
          <TreeRow g={[0]} sign="+" line="full" conn={1} Ic={TViewDim} t="View: [Primary]" c="#9299a4" bg="#3b4453" />
          <TreeRow g={[0]} line="half" conn={1} Ic={TEndDim} t="End of Flat" c="#9299a4" />
        </FlatSection>
      </Browser>
      <Canvas>
        <SceneDrawing />
        <CanvasButtons>
          <I s={10}><rect x="0" y="8" width="8" height="2" fill="#444" /></I>
          <I s={13}><rect x=".5" y="1" width="12" height="11" fill="none" stroke="#444" /><path d="M.5 3.500h12M6.500 3v9" stroke="#444" /></I>
          <WinClose c="#444" />
        </CanvasButtons>
        <Cube><ViewCube /></Cube>
        <NavBar>
          <NavItem $h={12}><NavX /></NavItem>
          <NavItem $h={38}><NavWheel /></NavItem>
          <NavItem $h={7}><NC /></NavItem>
          <NavRule />
          <NavItem $h={32}><NavHand /></NavItem>
          <NavItem $h={32}><NavZoom /></NavItem>
          <NavItem $h={10}><NC /></NavItem>
          <NavItem $h={36}><NavOrbit /></NavItem>
          <NavItem $h={5}><NC /></NavItem>
          <NavItem $h={32}><NavLook /></NavItem>
          <NavItem $h={26}><NavCube /></NavItem>
          <NavItem $h={8}><NC /></NavItem>
          <NavItem $h={24}><NavSphere /></NavItem>
          <NavItem $h={11}><NC /></NavItem>
          <NavItem $h={14}><NavMin /></NavItem>
        </NavBar>
      </Canvas>
    </Main>

    <DocTabs>
      <HomeTab><HomeIco />Home</HomeTab>
      <DocTab>400_90_1.ipt <X c="#a8aeb6" /></DocTab>
      <DocMenu><Burger c="#a0a8b2" /></DocMenu>
    </DocTabs>
    <Status>
      For Help, press F1
      <StatusCell $first $w={40}>1</StatusCell>
      <StatusCell $w={38}>1</StatusCell>
      <Grip>
        <I s={10}><g fill="#a8aeb6"><rect x="8" y="0" width="2" height="2" /><rect x="5" y="4" width="2" height="2" /><rect x="8" y="4" width="2" height="2" /><rect x="2" y="8" width="2" height="2" /><rect x="5" y="8" width="2" height="2" /><rect x="8" y="8" width="2" height="2" /></g></I>
      </Grip>
    </Status>
  </Shell>
);

export default App;
